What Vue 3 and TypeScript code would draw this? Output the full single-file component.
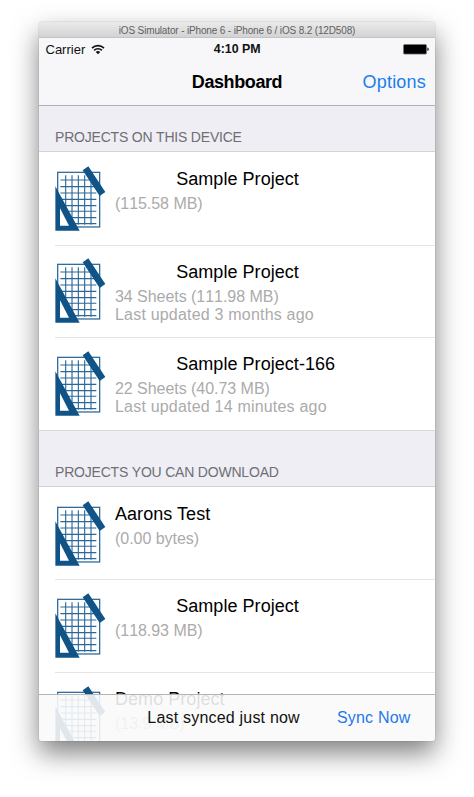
<script setup lang="ts">
interface Project {
  name: string
  indented: boolean
  details: string[]
}
interface Section {
  title: string
  projects: Project[]
}

const sections: Section[] = [
  {
    title: 'PROJECTS ON THIS DEVICE',
    projects: [
      { name: 'Sample Project', indented: true, details: ['(115.58 MB)'] },
      { name: 'Sample Project', indented: true, details: ['34 Sheets (111.98 MB)', 'Last updated 3 months ago'] },
      { name: 'Sample Project-166', indented: true, details: ['22 Sheets (40.73 MB)', 'Last updated 14 minutes ago'] },
    ],
  },
  {
    title: 'PROJECTS YOU CAN DOWNLOAD',
    projects: [
      { name: 'Aarons Test', indented: false, details: ['(0.00 bytes)'] },
      { name: 'Sample Project', indented: true, details: ['(118.93 MB)'] },
      { name: 'Demo Project', indented: false, details: ['(13.9 MB)'] },
    ],
  },
]
</script>

<template>
  <main class="desktop">
    <div class="window">
      <div class="titlebar"><span>iOS Simulator - iPhone 6 - iPhone 6 / iOS 8.2 (12D508)</span></div>
      <header class="top">
        <div class="status">
          <div class="carrier">
            <span>Carrier</span>
            <svg class="wifi" viewBox="0 0 14 11">
              <path d="M1 4.1a8.6 8.6 0 0 1 12 0M3.1 6.4a5.6 5.6 0 0 1 7.8 0" fill="none" stroke="#111" stroke-width="1.6" />
              <path d="M7 10.2 4.8 8a3.2 3.2 0 0 1 4.4 0z" fill="#111" />
            </svg>
          </div>
          <span class="clock">4:10 PM</span>
          <svg class="battery" viewBox="0 0 26 11">
            <rect x=".5" y=".5" width="23" height="9.6" rx="1.2" fill="#000" stroke="#777" stroke-width=".8" />
            <path d="M24.4 3.6c1.8.4 1.8 3 0 3.4z" fill="#111" />
          </svg>
        </div>
        <div class="nav">
          <h1>Dashboard</h1>
          <a class="options">Options</a>
        </div>
      </header>
      <div class="list">
        <section v-for="section in sections" :key="section.title">
          <h2><span>{{ section.title }}</span></h2>
          <article v-for="(project, i) in section.projects" :key="i" class="row">
            <svg class="icon" viewBox="48 24 152 196">
              <rect x="56" y="43" width="126" height="164" fill="#fff" stroke="#2b689a" stroke-width="3.8" />
              <path d="M80 52V200M99 52V200M118 52V200M137 52V200M156 52V200M64 66H172M64 86H172M64 105H172M64 124H172M64 143H172M64 160H172M64 179H172M64 197H172" stroke="#2b689a" stroke-width="3.4" />
              <path d="M49 85 122 218H49z" fill="#105487" />
              <path d="M63 151 90 203H63z" fill="#fff" />
              <path d="M131 37 148 25 199 102 182 114z" fill="#105487" />
            </svg>
            <div class="text">
              <h3 :class="{ indented: project.indented }">{{ project.name }}</h3>
              <p v-for="(line, n) in project.details" :key="n" :class="{ updated: n === 1 }">{{ line }}</p>
            </div>
          </article>
        </section>
      </div>
      <footer class="toolbar">
        <span class="synced">Last synced just now</span>
        <a class="sync">Sync Now</a>
      </footer>
    </div>
  </main>
</template>

<style>
body {
  background: #fff;
  overflow: hidden;
}
</style>

<style scoped>
.desktop {
  box-sizing: border-box;
  width: 474px;
  height: 797px;
  padding: 22px 39px 56px;
  overflow: hidden;
  background: #fff;
  font-family: "Liberation Sans", Arial, sans-serif;
  font-kerning: none;
  white-space: nowrap;
}
.window {
  position: relative;
  display: flex;
  flex-direction: column;
  width: 396px;
  height: 719px;
  overflow: hidden;
  border-radius: 3px;
  background: #fff;
  box-shadow: 0 0 1px rgba(0, 0, 0, 0.5), 0 12px 27px rgba(0, 0, 0, 0.5);
}
.titlebar {
  box-sizing: border-box;
  flex: none;
  height: 16px;
  display: flex;
  justify-content: center;
  border-bottom: 1px solid #c4c4c4;
  background: linear-gradient(#eaeaea, #d3d3d3);
  color: #606060;
  font-size: 10px;
  letter-spacing: -0.15px;
  line-height: 17px;
}
.top {
  box-sizing: border-box;
  flex: none;
  height: 68px;
  border-bottom: 1px solid #b2b2b4;
  background: #f7f7f9;
}
.status {
  display: grid;
  grid-template-columns: 1fr auto 1fr;
  align-items: center;
  height: 22px;
  padding: 0 6px 0 6.5px;
  font-size: 13px;
  color: #111;
}
.carrier {
  display: flex;
  align-items: center;
  gap: 6px;
}
.wifi {
  width: 14px;
  height: 11px;
}
.clock {
  font-weight: bold;
  font-size: 12.4px;
}
.battery {
  justify-self: end;
  width: 26px;
  height: 11px;
}
.nav {
  display: grid;
  grid-template-columns: 1fr auto 1fr;
  align-items: center;
  height: 45px;
  padding: 0 9px;
}
h1 {
  grid-column: 2;
  margin: 0;
  font-size: 18px;
  letter-spacing: -0.4px;
  font-weight: bold;
}
.options {
  justify-self: end;
  font-size: 18px;
  letter-spacing: 0.2px;
  color: #1a7df0;
}
.list {
  flex: 1;
  min-height: 0;
  overflow: hidden;
}
h2 {
  box-sizing: border-box;
  display: flex;
  align-items: flex-end;
  height: 46px;
  margin: 0;
  padding: 0 16px 6px;
  border-bottom: 1px solid #d3d3d7;
  background: #eeeef4;
  color: #6f6f74;
  font-size: 14px;
  letter-spacing: -0.2px;
  font-weight: normal;
  line-height: 16px;
}
section + section h2 {
  height: 57px;
  border-top: 1px solid #dadade;
}
.row {
  box-sizing: border-box;
  display: flex;
  gap: 9.3px;
  height: 92.6px;
  padding: 13.8px 0 0 16px;
}
.row + .row {
  background: linear-gradient(#e4e4e6, #e4e4e6) 16px 0 / 100% 1px no-repeat;
}
.icon {
  flex: none;
  width: 50.7px;
  height: 65.3px;
}
h3 {
  margin: 3.2px 0 5px;
  font-size: 18px;
  font-weight: normal;
  font-kerning: normal;
  letter-spacing: 0.05px;
  line-height: 21px;
  color: #000;
}
.indented {
  padding-left: 61.2px;
}
p {
  margin: 0;
  color: #ababab;
  font-size: 16px;
  letter-spacing: -0.04px;
  line-height: 18px;
}
.updated {
  letter-spacing: 0.2px;
}
.toolbar {
  position: absolute;
  left: 0;
  right: 0;
  bottom: 0;
  box-sizing: border-box;
  display: flex;
  align-items: center;
  justify-content: flex-end;
  gap: 37px;
  height: 47px;
  padding-right: 24.5px;
  border-top: 1px solid #b4b4b4;
  background: rgba(249, 249, 249, 0.89);
  font-size: 16px;
}
.synced {
  letter-spacing: 0.2px;
  color: #111;
}
.sync {
  letter-spacing: 0.2px;
  color: #1f78e8;
}
</style>
